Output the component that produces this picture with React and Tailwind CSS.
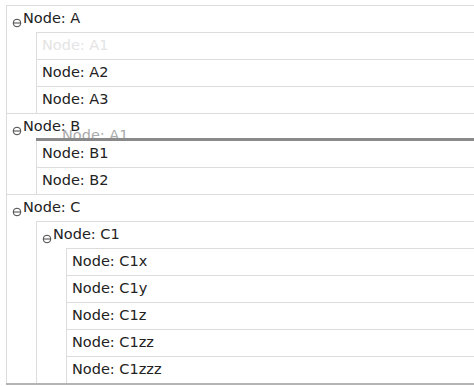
import React from 'react';

const tree = [
  {
    label: 'Node: A',
    children: [{ label: 'Node: A1', dragging: true }, { label: 'Node: A2' }, { label: 'Node: A3' }],
  },
  { label: 'Node: B', children: [{ label: 'Node: B1' }, { label: 'Node: B2' }] },
  {
    label: 'Node: C',
    children: [
      {
        label: 'Node: C1',
        children: [
          { label: 'Node: C1x' },
          { label: 'Node: C1y' },
          { label: 'Node: C1z' },
          { label: 'Node: C1zz' },
          { label: 'Node: C1zzz' },
        ],
      },
    ],
  },
];

// kleines "minus im kreis" zum zuklappen
const Collapse = () => (
  <svg width="10" height="10" viewBox="0 0 10 10" className="mt-[7px] mr-[1px] shrink-0">
    <circle cx="5" cy="5" r="3.8" fill="none" stroke="#444" strokeWidth="1" />
    <line x1="1.5" y1="5" x2="8.5" y2="5" stroke="#444" strokeWidth="1" />
  </svg>
);

const TreeNode = ({ node }) => (
  <li className="border-l border-t border-[#dcdcdc]">
    <div
      className={
        'flex items-center h-[26px] pl-[5px]' + (node.dragging ? ' text-[#e4e4e4]' : ' text-[#222]')
      }
    >
      {node.children && <Collapse />}
      <span>{node.label}</span>
    </div>
    {node.children && (
      <ul className="ml-[29px]">
        {node.children.map((c) => (
          <TreeNode key={c.label} node={c} />
        ))}
      </ul>
    )}
  </li>
);

export default function App() {
  return (
    <div
      className="relative w-screen h-[386px] overflow-hidden bg-white text-[14.5px]"
      style={{ fontFamily: '"DejaVu Sans", Verdana, sans-serif' }}
    >
      <ul className="ml-[6px] mt-[5px] w-[500px] border-b-2 border-b-[#b4b4b4]">
        {tree.map((n) => (
          <TreeNode key={n.label} node={n} />
        ))}
      </ul>

      {/* drag ghost + drop marker */}
      <div className="absolute left-[62px] top-[125px] text-[#ababab] pointer-events-none">Node: A1</div>
      <div className="absolute left-[36px] right-0 top-[138px] h-[3px] bg-[#8a8a8a]" />
    </div>
  );
}
